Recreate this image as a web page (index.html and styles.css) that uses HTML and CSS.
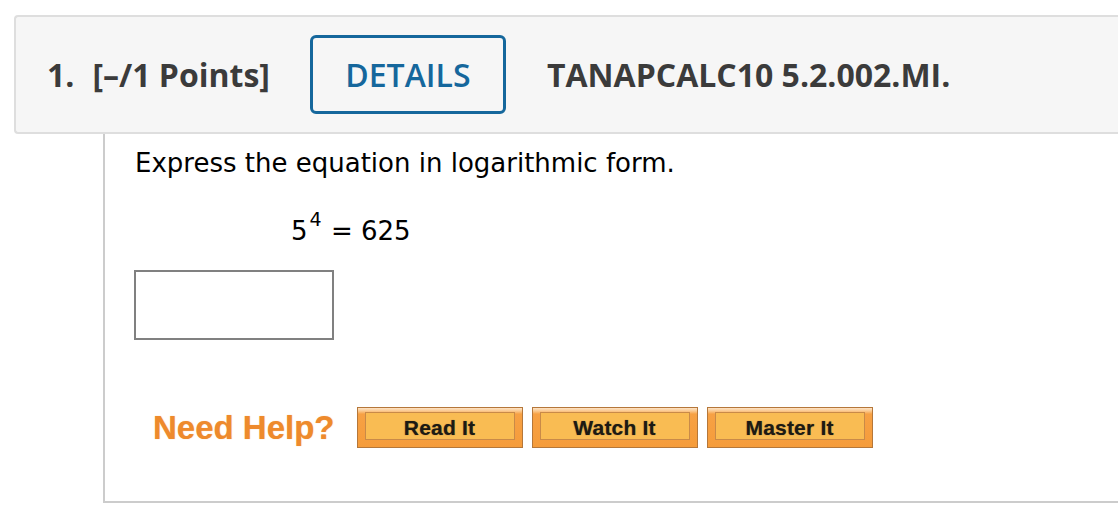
FILE: index.html
```html
<!DOCTYPE html>
<html>
<head>
<meta charset="utf-8">
<link rel="stylesheet" href="styles.css">
</head>
<body>
<div class="page">
  <div class="header">
    <span class="num">1.</span>
    <span class="points">[–/1 Points]</span>
    <button class="details">DETAILS</button>
    <span class="code">TANAPCALC10 5.2.002.MI.</span>
  </div>
  <div class="question">
    <p class="prompt">Express the equation in logarithmic form.</p>
    <p class="eq">5<sup class="exp">4</sup> = 625</p>
    <input class="answer" type="text">
    <div class="help">
      <span class="need">Need Help?</span>
      <button class="hb"><span class="hb-in">Read It</span></button>
      <button class="hb"><span class="hb-in">Watch It</span></button>
      <button class="hb"><span class="hb-in">Master It</span></button>
    </div>
  </div>
</div>
</body>
</html>
```

FILE: styles.css
```css
html, body {
  margin: 0;
  padding: 0;
  background: #ffffff;
  overflow: hidden;
}

.page {
  padding-top: 15px;
  padding-left: 14px;
}

.header {
  box-sizing: border-box;
  height: 119px;
  display: flex;
  align-items: center;
  padding-left: 31px;
  background: #f6f6f6;
  border: 2px solid #dedede;
  border-right: none;
  border-radius: 4px 0 0 4px;
  font-family: "Open Sans", sans-serif;
  font-weight: 700;
  font-size: 32px;
  color: #3b3b3b;
  white-space: nowrap;
  overflow: hidden;
}

.num {
  margin-right: 18px;
}

.points {
  margin-right: 40px;
}

.details {
  box-sizing: border-box;
  flex: none;
  width: 196px;
  height: 79px;
  margin-right: 41px;
  padding: 0;
  background: #f6f6f6;
  border: 3px solid #15679c;
  border-radius: 6px;
  font-family: "Open Sans", sans-serif;
  font-weight: 600;
  font-size: 32px;
  color: #15679c;
}

.question {
  box-sizing: border-box;
  margin-left: 89px;
  height: 369px;
  padding: 14px 0 0 30px;
  border-left: 2px solid #cccccc;
  border-bottom: 2px solid #cccccc;
  font-family: "DejaVu Sans", Verdana, sans-serif;
  font-size: 26px;
  color: #000000;
}

.prompt {
  margin: 0;
  line-height: 30px;
}

.eq {
  margin: 38px 0 0 156px;
  line-height: 30px;
}

.exp {
  font-size: 19px;
  line-height: 0;
  vertical-align: 14px;
  margin-left: 2px;
  margin-right: 1px;
}

.answer {
  display: block;
  box-sizing: border-box;
  width: 200px;
  height: 70px;
  margin: 24px 0 0 -1px;
  border: 2px solid #808080;
  background: #ffffff;
  outline: none;
}

.help {
  display: flex;
  align-items: center;
  margin-top: 67px;
  padding-left: 18px;
}

.need {
  font-family: "Liberation Sans", Arial, sans-serif;
  font-weight: 700;
  font-size: 33px;
  color: #ee8a2c;
  margin-right: 22px;
  text-shadow: 0 0 1px rgba(238, 138, 44, 0.6);
}

.hb {
  box-sizing: border-box;
  width: 166px;
  height: 41px;
  margin-right: 9px;
  padding: 4px 7px 7px 7px;
  display: flex;
  border: 1px solid #b5773a;
  background: linear-gradient(#fde3c6 0, #fbc98f 3px, #f7a144 6px, #f59c3b 100%);
  cursor: pointer;
}

.hb-in {
  box-sizing: border-box;
  flex: 1;
  display: flex;
  align-items: center;
  justify-content: center;
  padding-top: 3px;
  border: 1px solid #c98a48;
  background: #f9bc53;
  font-family: "Liberation Sans", Arial, sans-serif;
  font-weight: 700;
  font-size: 21px;
  letter-spacing: 0.2px;
  color: #1c1a14;
  text-shadow: 0 0 1px rgba(0, 0, 0, 0.5);
}
```
